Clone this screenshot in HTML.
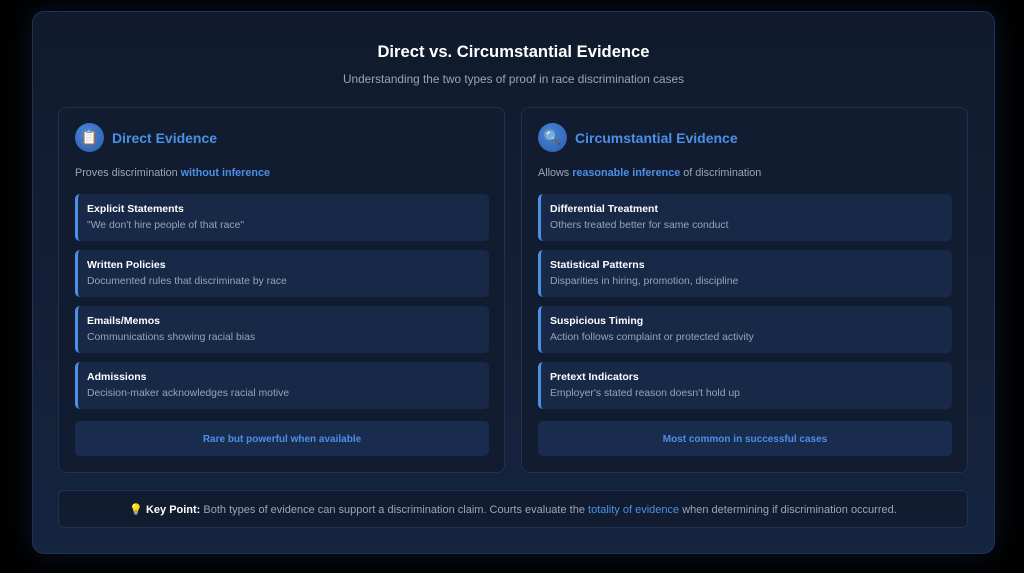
<!DOCTYPE html>
<html><head><meta charset="utf-8"><style>
*{box-sizing:border-box;margin:0;padding:0}
body{width:1024px;height:573px;background:#000;font-family:"Liberation Sans",sans-serif;position:relative;overflow:hidden}
.wrap{position:absolute;left:32px;top:11px;width:963px;height:543px;border-radius:12px;background:linear-gradient(180deg,#101a2c,#15243f);border:1px solid #1e3358;box-shadow:0 0 30px rgba(40,80,150,.25)}
h1{position:absolute;left:0;right:0;top:30px;text-align:center;color:#fff;font-size:16.6px;font-weight:bold}
.sub{position:absolute;left:0;right:0;top:60px;text-align:center;color:#9aa5b8;font-size:11.8px}
.card{position:absolute;top:95px;width:447px;height:366px;border:1px solid #1f3050;border-radius:8px;background:#111c30}
.icon{position:absolute;left:16px;top:15px;width:29px;height:29px;border-radius:50%;background:radial-gradient(circle at 40% 35%,#4a86d8,#2a5cab);text-align:center;line-height:29px;font-size:14px}
.ct{position:absolute;left:53px;top:22px;color:#4c8fe6;font-size:14px;font-weight:bold}
.desc{position:absolute;left:16px;top:59px;color:#9aa5b8;font-size:10.8px}
.desc b{color:#4c8fe6}
.item{position:absolute;left:16px;width:414px;height:47px;background:#182947;border-radius:5px;border-left:3px solid #4c8fe6;padding:9px 0 0 9px}
.item .t{color:#fff;font-size:10.5px;font-weight:bold}
.item .d{color:#98a3b5;font-size:10.4px;margin-top:5px}
.foot{position:absolute;left:16px;top:313px;width:414px;height:35px;background:#1a2c4d;border-radius:5px;text-align:center;line-height:37px;color:#4c8fe6;font-size:10px;font-weight:bold}
.key{position:absolute;left:25px;top:478px;width:910px;height:38px;border:1px solid #1f3050;border-radius:6px;background:#111c30;text-align:center;line-height:38px;font-size:11px;color:#9aa5b8}
.key b{color:#fff}.key span{color:#4c8fe6}
</style></head><body>
<div class="wrap">
<h1>Direct vs. Circumstantial Evidence</h1>
<div class="sub">Understanding the two types of proof in race discrimination cases</div>
<div class="card" style="left:25px">
<div class="icon">📋</div><div class="ct">Direct Evidence</div>
<div class="desc">Proves discrimination <b>without inference</b></div>
<div class="item" style="top:86px"><div class="t">Explicit Statements</div><div class="d">"We don't hire people of that race"</div></div>
<div class="item" style="top:142px"><div class="t">Written Policies</div><div class="d">Documented rules that discriminate by race</div></div>
<div class="item" style="top:198px"><div class="t">Emails/Memos</div><div class="d">Communications showing racial bias</div></div>
<div class="item" style="top:254px"><div class="t">Admissions</div><div class="d">Decision-maker acknowledges racial motive</div></div>
<div class="foot">Rare but powerful when available</div>
</div>
<div class="card" style="left:488px">
<div class="icon">🔍</div><div class="ct">Circumstantial Evidence</div>
<div class="desc">Allows <b>reasonable inference</b> of discrimination</div>
<div class="item" style="top:86px"><div class="t">Differential Treatment</div><div class="d">Others treated better for same conduct</div></div>
<div class="item" style="top:142px"><div class="t">Statistical Patterns</div><div class="d">Disparities in hiring, promotion, discipline</div></div>
<div class="item" style="top:198px"><div class="t">Suspicious Timing</div><div class="d">Action follows complaint or protected activity</div></div>
<div class="item" style="top:254px"><div class="t">Pretext Indicators</div><div class="d">Employer's stated reason doesn't hold up</div></div>
<div class="foot">Most common in successful cases</div>
</div>
<div class="key">💡 <b>Key Point:</b> Both types of evidence can support a discrimination claim. Courts evaluate the <span>totality of evidence</span> when determining if discrimination occurred.</div>
</div>
</body></html>
